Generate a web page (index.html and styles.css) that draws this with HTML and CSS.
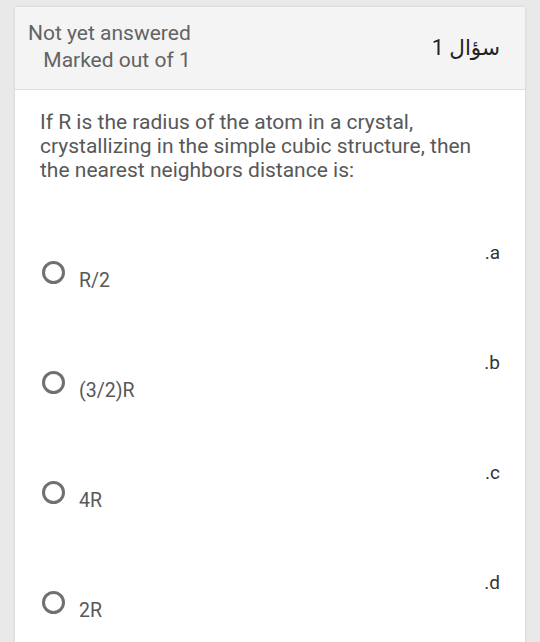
FILE: index.html
```html
<!doctype html>
<html lang="ar" dir="ltr">
<head>
    <meta charset="UTF-8">
    <meta name="viewport" content="width=device-width, initial-scale=1.0">
    <title>سؤال 1</title>
    <link rel="stylesheet" href="styles.css">
</head>
<body>
    <div class="page">
        <div class="que">
            <div class="info">
                <div class="state">
                    <div>Not yet answered</div>
                    <div>Marked out of 1</div>
                </div>
                <h3 class="no" dir="rtl">سؤال 1</h3>
            </div>
            <div class="content">
                <div class="qtext">If R is the radius of the atom in a crystal, crystallizing in the simple cubic structure, then the nearest neighbors distance is:</div>
                <div class="answer">
                    <div class="r">
                        <div class="num">.a</div>
                        <label class="opt"><span class="radio"></span><span class="txt">R/2</span></label>
                    </div>
                    <div class="r">
                        <div class="num">.b</div>
                        <label class="opt"><span class="radio"></span><span class="txt">(3/2)R</span></label>
                    </div>
                    <div class="r">
                        <div class="num">.c</div>
                        <label class="opt"><span class="radio"></span><span class="txt">4R</span></label>
                    </div>
                    <div class="r">
                        <div class="num">.d</div>
                        <label class="opt"><span class="radio"></span><span class="txt">2R</span></label>
                    </div>
                </div>
            </div>
        </div>
    </div>
</body>
</html>
```

FILE: styles.css
```css
*{
    margin: 0;
    padding: 0;
    box-sizing: border-box;
}
body{
    background-color: #e9e9e9;
    font-family: Roboto, "DejaVu Sans", sans-serif;
    overflow: hidden;
}
.page{
    padding: 7px 15px 0 15px;
}
.que{
    background-color: #fff;
    height: 700px;
    box-shadow: 0 0 3px rgba(0,0,0,0.12);
}
.info{
    height: 83px;
    background-color: #f4f4f4;
    border-bottom: 1px solid #dedede;
    display: flex;
    justify-content: space-between;
    align-items: center;
    padding: 0 25px 0 13px;
}
.state{
    text-align: right;
    font-size: 21px;
    line-height: 27px;
    color: #636363;
    padding-bottom: 2px;
}
.no{
    font-weight: normal;
    font-size: 21.5px;
    color: #222;
    padding-bottom: 2px;
}
.content{
    padding: 20px 25px 0 25px;
}
.qtext{
    font-size: 21px;
    line-height: 24px;
    color: #585858;
    padding-right: 20px;
}
.answer{
    padding-top: 63px;
}
.r{
    margin-bottom: 64px;
}
.num{
    text-align: right;
    font-size: 19px;
    line-height: 16px;
    color: #333;
}
.opt{
    display: flex;
    align-items: flex-start;
}
.radio{
    width: 23px;
    height: 23px;
    margin-left: 2px;
    border: 3px solid #707070;
    border-radius: 50%;
    flex-shrink: 0;
}
.txt{
    margin-left: 14px;
    margin-top: 10px;
    font-size: 19.5px;
    line-height: 20px;
    color: #585858;
}
```
